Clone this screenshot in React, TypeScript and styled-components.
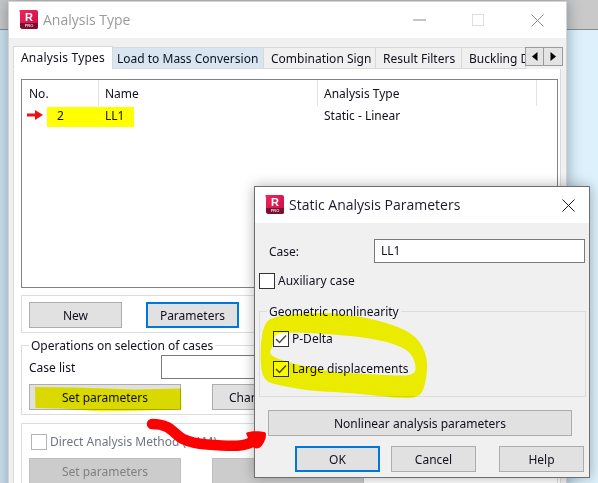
import React from "react";
import styled, { createGlobalStyle } from "styled-components";

const GlobalStyle = createGlobalStyle`
  html, body {
    margin: 0;
    padding: 0;
    background: #dcf1fb;
  }
  #root {
    width: 598px;
    height: 483px;
  }
`;

const Desktop = styled.div`
  position: relative;
  width: 598px;
  height: 483px;
  overflow: hidden;
  background: linear-gradient(90deg, #cfe2f0 0, #d8e9f4 10px, #dcf1fb 100%);
  font-family: "Noto Sans", "Liberation Sans", sans-serif;
  font-size: 12px;
  line-height: 18px;
  color: #10101e;
`;

const BackWindow = styled.div`
  height: 29px;
  background: #c9c9c9;
  border-bottom: 1px solid #8a8a8a;
`;

const MainWindow = styled.div`
  position: absolute;
  left: 8px;
  top: 1px;
  width: 559px;
  height: 500px;
  background: #f0f0f0;
  box-shadow: 0 0 14px rgba(40, 60, 80, 0.45);
  border: 1px solid #d4d4d4;
  box-sizing: border-box;
  display: flex;
  flex-direction: column;
`;

const DialogWindow = styled.div`
  position: absolute;
  left: 254px;
  top: 186px;
  width: 336px;
  height: 292px;
  background: #f0f0f0;
  border: 1px solid #6e6e6e;
  box-sizing: border-box;
  box-shadow: 0 0 12px rgba(0, 0, 0, 0.3);
  display: flex;
  flex-direction: column;
`;

const TitleBar = styled.div<{ $h: number; $pad: number }>`
  height: ${(p) => p.$h}px;
  flex: none;
  background: #fff;
  display: flex;
  align-items: center;
  padding-left: ${(p) => p.$pad}px;
  gap: 5px;
`;

const TitleText = styled.span<{ $dim?: boolean; $size: number }>`
  font-family: "Open Sans", "Noto Sans", sans-serif;
  font-size: ${(p) => p.$size}px;
  color: ${(p) => (p.$dim ? "#9a9a9a" : "#1a1a2a")};
  white-space: nowrap;
`;

const WindowControls = styled.div`
  margin-left: auto;
  display: flex;
  align-items: center;
`;

const ControlSlot = styled.div<{ $w: number }>`
  width: ${(p) => p.$w}px;
  display: flex;
  justify-content: center;
`;

const TabStrip = styled.div`
  position: relative;
  height: 25px;
  margin-top: 6px;
  display: flex;
  align-items: flex-end;
  padding-left: 4px;
  flex: none;
`;

const Tab = styled.div<{ $active?: boolean; $hot?: boolean; $w: number; $pad: number }>`
  width: ${(p) => p.$w}px;
  height: ${(p) => (p.$active ? 24 : 22)}px;
  box-sizing: border-box;
  flex: none;
  overflow: hidden;
  white-space: nowrap;
  line-height: ${(p) => (p.$active ? 21 : 22)}px;
  letter-spacing: ${(p) => (p.$active ? 0.2 : 0)}px;
  padding-left: ${(p) => p.$pad}px;
  background: ${(p) => (p.$active ? "#fff" : p.$hot ? "#d8e6f2" : "#f0f0f0")};
  border: 1px solid #d9d9d9;
  border-bottom: 1px solid ${(p) => (p.$active ? "#fff" : "#d9d9d9")};
  border-left: ${(p) => (p.$active ? "1px solid #d9d9d9" : "none")};
  margin-bottom: ${(p) => (p.$active ? -1 : 0)}px;
  z-index: ${(p) => (p.$active ? 1 : 0)};
`;

const TabScroller = styled.div`
  position: absolute;
  left: 516px;
  top: 3px;
  display: flex;
  z-index: 2;
`;

const ScrollButton = styled.div`
  width: 19px;
  height: 19px;
  box-sizing: border-box;
  background: #e4e4e4;
  border: 1px solid #9a9a9a;
  display: flex;
  align-items: center;
  justify-content: center;
  & + & {
    margin-left: -1px;
    width: 20px;
  }
`;

const TabPanel = styled.div`
  margin-left: 4px;
  width: 548px;
  flex: 1;
  box-sizing: border-box;
  background: #fff;
  border-left: 1px solid #d9d9d9;
  border-right: 1px solid #d9d9d9;
  padding: 10px 2px 0 7px;
`;

const CaseList = styled.div`
  height: 209px;
  box-sizing: border-box;
  background: #fff;
  border: 1px solid #82828a;
  display: flex;
  flex-direction: column;
`;

const CaseRow = styled.div<{ $header?: boolean }>`
  display: grid;
  grid-template-columns: 77px 219px 219px 1fr;
  height: ${(p) => (p.$header ? 26 : 16)}px;
  margin-top: ${(p) => (p.$header ? 0 : 1)}px;
  align-items: center;
  flex: none;
`;

const Cell = styled.div<{ $sep?: boolean; $indent: number }>`
  height: 100%;
  display: flex;
  align-items: center;
  padding-left: ${(p) => p.$indent}px;
  padding-top: ${(p) => (p.$sep ? 2 : 0)}px;
  box-sizing: border-box;
  border-right: ${(p) => (p.$sep ? "1px solid #e3e3e3" : "none")};
`;

const Section = styled.div<{ $h: number; $gap: number }>`
  position: relative;
  height: ${(p) => p.$h}px;
  margin-top: ${(p) => p.$gap}px;
  box-sizing: border-box;
  border: 1px solid #dcdcdc;
  padding: 6px 7px 0;
`;

const Legend = styled.span<{ $left: number; $bg: string }>`
  position: absolute;
  top: -9px;
  left: ${(p) => p.$left}px;
  padding: 0 2px;
  background: ${(p) => p.$bg};
  white-space: nowrap;
`;

const Line = styled.div<{ $gap?: number }>`
  display: flex;
  align-items: center;
  margin-top: ${(p) => p.$gap ?? 0}px;
`;

const PushButton = styled.div<{ $w: number; $after?: number; $primary?: boolean; $off?: boolean; $clip?: boolean }>`
  width: ${(p) => p.$w}px;
  height: 26px;
  flex: none;
  box-sizing: border-box;
  margin-left: ${(p) => p.$after ?? 0}px;
  background: ${(p) => (p.$off ? "#cccccc" : "#e1e1e1")};
  color: ${(p) => (p.$off ? "#808080" : "inherit")};
  border: ${(p) => (p.$primary ? "2px solid #0078d7" : `1px solid ${p.$off ? "#bfbfbf" : "#adadad"}`)};
  display: flex;
  align-items: center;
  justify-content: ${(p) => (p.$clip ? "flex-start" : "center")};
  padding-left: ${(p) => (p.$clip ? 16 : 0)}px;
  padding-top: 2px;
  white-space: nowrap;
  overflow: hidden;
`;

const FieldLabel = styled.span<{ $w: number; $pad?: number }>`
  width: ${(p) => p.$w}px;
  padding-left: ${(p) => p.$pad ?? 0}px;
  padding-top: 2px;
  box-sizing: border-box;
  flex: none;
`;

const TextField = styled.div<{ $w: number }>`
  width: ${(p) => p.$w}px;
  height: 24px;
  flex: none;
  box-sizing: border-box;
  background: #fff;
  border: 1px solid #7a7a7a;
  padding-left: 6px;
  display: flex;
  align-items: center;
`;

const Box = styled.div<{ $off?: boolean }>`
  width: 16px;
  height: 16px;
  flex: none;
  box-sizing: border-box;
  background: #fff;
  border: 1px solid ${(p) => (p.$off ? "#b4b4b4" : "#333")};
  display: flex;
  align-items: center;
  justify-content: center;
`;

const Check = styled.label<{ $off?: boolean; $inset?: number; $below?: number }>`
  display: flex;
  align-items: center;
  gap: 3px;
  height: 16px;
  margin-left: ${(p) => p.$inset ?? 0}px;
  margin-top: ${(p) => p.$below ?? 0}px;
  color: ${(p) => (p.$off ? "#6f7680" : "inherit")};
  white-space: nowrap;
`;

const DialogBody = styled.div`
  flex: 1;
  padding: 16px 4px 0 4px;
`;

const DialogGroup = styled.div`
  position: relative;
  height: 86px;
  margin-top: 22px;
  width: 327px;
  box-sizing: border-box;
  border: 1px solid #dcdcdc;
  padding: 19px 0 0 13px;
`;

const NonlinearRow = styled(Line)`
  padding-left: 9px;
`;

const ButtonRow = styled.div`
  display: flex;
  margin: 10px 0 0 36px;
`;

const Overlay = styled.svg<{ $marker?: boolean }>`
  position: absolute;
  left: 0;
  top: 0;
  pointer-events: none;
  mix-blend-mode: ${(p) => (p.$marker ? "multiply" : "normal")};
`;

const Logo = () => (
  <svg width="19" height="20" viewBox="0 0 19 20">
    <defs>
      <linearGradient id="rv" x1="0" y1="0" x2="1" y2="1">
        <stop offset="0" stopColor="#f0245c" />
        <stop offset="1" stopColor="#c90f45" />
      </linearGradient>
    </defs>
    <path d="M2 0h15a2 2 0 0 1 2 2v15a2 2 0 0 1-2 2H4a3 3 0 0 1-3-3V2a1 1 0 0 1 1-2z" fill="url(#rv)" />
    <path d="M1 13h18v4a2 2 0 0 1-2 2H4a3 3 0 0 1-3-3z" fill="#7c0f30" />
    <text x="10" y="11" fontSize="11" fontWeight="700" fontFamily="Liberation Sans" fill="#fff" textAnchor="middle">R</text>
    <text x="10" y="17.4" fontSize="4" fontWeight="700" fontFamily="Liberation Sans" fill="#f3c6d2" textAnchor="middle">PRO</text>
  </svg>
);

const CloseIcon = ({ color }: { color: string }) => (
  <svg width="13" height="13" viewBox="0 0 13 13">
    <path d="M.5.5l12 12M12.5.5l-12 12" stroke={color} strokeWidth="1" fill="none" />
  </svg>
);

const Tick = () => (
  <svg width="12" height="10" viewBox="0 0 12 10">
    <path d="M1 5l3.5 3.5L11 1.5" stroke="#4a4a4a" strokeWidth="1.5" fill="none" />
  </svg>
);

const TriangleLeft = () => (
  <svg width="6" height="9" viewBox="0 0 6 9"><path d="M5.5 0v9L0 4.5z" fill="#000" /></svg>
);

const TriangleRight = () => (
  <svg width="6" height="9" viewBox="0 0 6 9"><path d="M.5 0v9L6 4.5z" fill="#000" /></svg>
);

// round a list of hand marked points into a closed blob
const blob = (pts: number[][]) => {
  const mid = (a: number[], b: number[]) => [(a[0] + b[0]) / 2, (a[1] + b[1]) / 2];
  let d = "";
  pts.forEach((p, i) => {
    const next = pts[(i + 1) % pts.length];
    const m = mid(p, next);
    if (i === 0) {
      const m0 = mid(pts[pts.length - 1], p);
      d += `M${m0[0]} ${m0[1]}`;
    }
    d += `Q${p[0]} ${p[1]} ${m[0]} ${m[1]}`;
  });
  return d + "Z";
};

const ringOuter = [
  [262, 330], [270, 316], [322, 312], [358, 316], [392, 324], [417, 336], [428, 358], [426, 382], [420, 398],
  [395, 398], [355, 393], [312, 391], [282, 386], [263, 381], [260, 358],
];
const ringInner = [
  [273, 346], [274, 335], [284, 332], [333, 334], [378, 339], [408, 349], [416, 363], [415, 376],
  [383, 375], [350, 373], [330, 372], [290, 363], [268, 355],
];

const App = () => {
  return (
    <Desktop>
      <GlobalStyle />
      <BackWindow />

      <MainWindow>
        <TitleBar $h={36} $pad={10}>
          <Logo />
          <TitleText $dim $size={14}>Analysis Type</TitleText>
          <WindowControls>
            <ControlSlot $w={58}>
              <svg width="13" height="2" viewBox="0 0 13 2"><path d="M0 1h13" stroke="#8c8c8c" /></svg>
            </ControlSlot>
            <ControlSlot $w={60}>
              <svg width="12" height="12" viewBox="0 0 12 12"><rect x=".5" y=".5" width="11" height="11" fill="none" stroke="#dedede" /></svg>
            </ControlSlot>
            <ControlSlot $w={58}>
              <CloseIcon color="#8c8c8c" />
            </ControlSlot>
          </WindowControls>
        </TitleBar>

        <TabStrip>
          <Tab $active $w={100} $pad={7}>Analysis Types</Tab>
          <Tab $hot $w={151} $pad={4}>Load to Mass Conversion</Tab>
          <Tab $w={112} $pad={7}>Combination Sign</Tab>
          <Tab $w={86} $pad={7}>Result Filters</Tab>
          <Tab $w={64} $pad={7}>Buckling Diff</Tab>
          <TabScroller>
            <ScrollButton><TriangleLeft /></ScrollButton>
            <ScrollButton><TriangleRight /></ScrollButton>
          </TabScroller>
        </TabStrip>

        <TabPanel>
          <CaseList>
            <CaseRow $header>
              <Cell $sep $indent={7}>No.</Cell>
              <Cell $sep $indent={6}>Name</Cell>
              <Cell $sep $indent={6}>Analysis Type</Cell>
            </CaseRow>
            <CaseRow>
              <Cell $indent={35}>2</Cell>
              <Cell $indent={6}>LL1</Cell>
              <Cell $indent={6}>Static - Linear</Cell>
            </CaseRow>
          </CaseList>

          <Section $h={38} $gap={7}>
            <Line>
              <PushButton $w={93}>New</PushButton>
              <PushButton $w={93} $after={24} $primary>Parameters</PushButton>
            </Line>
          </Section>

          <Section $h={70} $gap={12}>
            <Legend $left={7} $bg="#fff">Operations on selection of cases</Legend>
            <Line $gap={3}>
              <FieldLabel $w={132}>Case list</FieldLabel>
              <TextField $w={200} />
            </Line>
            <Line $gap={5}>
              <PushButton $w={152}>Set parameters</PushButton>
              <PushButton $w={152} $after={31} $clip>Change analysis type</PushButton>
            </Line>
          </Section>

          <Section $h={80} $gap={8}>
            <Line $gap={4}>
              <Check $off $inset={2}>
                <Box $off />
                <span>Direct Analysis Method (DAM)</span>
              </Check>
            </Line>
            <Line $gap={8}>
              <PushButton $w={152} $off>Set parameters</PushButton>
              <PushButton $w={152} $after={31} $off />
            </Line>
          </Section>
        </TabPanel>
      </MainWindow>

      <DialogWindow>
        <TitleBar $h={36} $pad={10}>
          <Logo />
          <TitleText $size={14}>Static Analysis Parameters</TitleText>
          <WindowControls>
            <ControlSlot $w={42}>
              <CloseIcon color="#1a1a1a" />
            </ControlSlot>
          </WindowControls>
        </TitleBar>
        <DialogBody>
          <Line>
            <FieldLabel $w={115} $pad={10}>Case:</FieldLabel>
            <TextField $w={211}>LL1</TextField>
          </Line>
          <Line $gap={10}>
            <Check>
              <Box />
              <span>Auxiliary case</span>
            </Check>
          </Line>
          <DialogGroup>
            <Legend $left={7} $bg="#f0f0f0">Geometric nonlinearity</Legend>
            <Check>
              <Box><Tick /></Box>
              <span>P-Delta</span>
            </Check>
            <Check $below={14}>
              <Box><Tick /></Box>
              <span>Large displacements</span>
            </Check>
          </DialogGroup>
          <NonlinearRow $gap={13}>
            <PushButton $w={304}>Nonlinear analysis parameters</PushButton>
          </NonlinearRow>
          <ButtonRow>
            <PushButton $w={85} $primary>OK</PushButton>
            <PushButton $w={85} $after={11}>Cancel</PushButton>
            <PushButton $w={85} $after={23}>Help</PushButton>
          </ButtonRow>
        </DialogBody>
      </DialogWindow>

      <Overlay $marker width="598" height="483" viewBox="0 0 598 483">
        <path d="M47 107h87v20H47z" fill="#ffff00" />
        <path d="M35 387l40 .5 60 2 46-1 .5 21-30 1-50 1-40-3-26-.5z" fill="#f6f600" />
        <path d={blob(ringOuter) + blob(ringInner)} fill="#fafa00" fillRule="evenodd" />
      </Overlay>
      <Overlay width="598" height="483" viewBox="0 0 598 483">
        <path d="M27 115h9" stroke="#ee1111" strokeWidth="3" />
        <path d="M35 110l8 5-8 5z" fill="#ee1111" />
        <path
          d="M152 424c6 0 11 1 15 3 6 3 10 9 16 12 8 4 16 5 24 5.500 12 1 24 2 33 1 6-.5 10-2 14-5"
          stroke="#ff0000"
          strokeWidth="10.500"
          strokeLinecap="round"
          fill="none"
        />
        <path d="M246 433c3-2 14-2 18-1 2 0 2 2 2 3 0 4-3 11-7 13-2 1-6 0-8-2z" fill="#ff0000" />
      </Overlay>
    </Desktop>
  );
};

export default App;
